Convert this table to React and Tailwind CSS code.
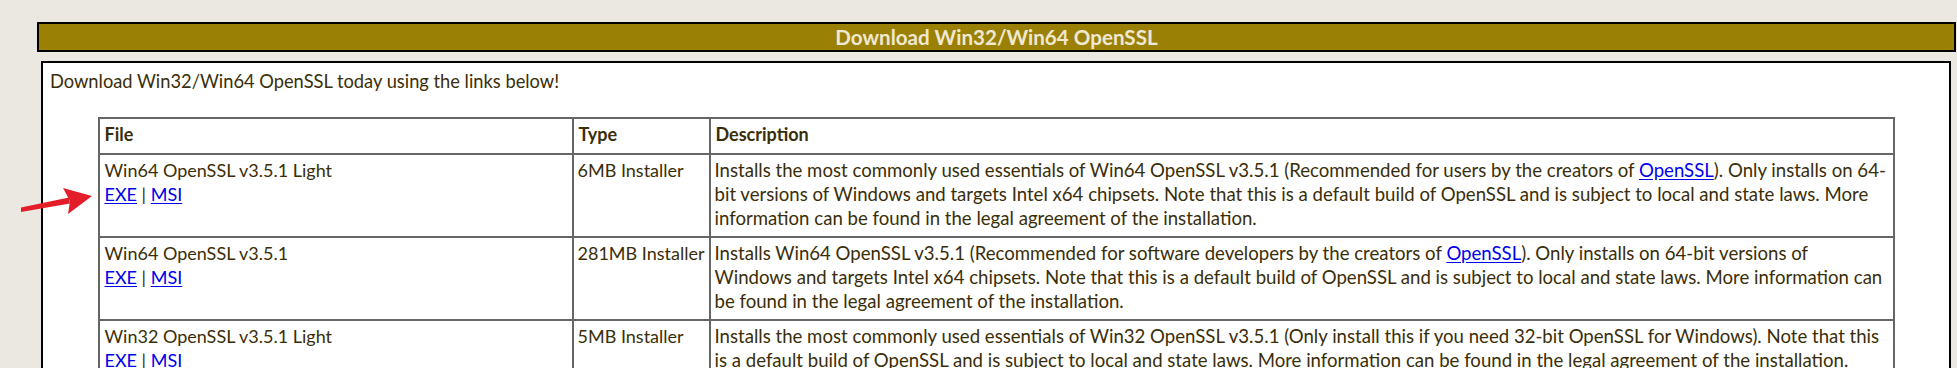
import React from 'react';

const rows = [
  {
    name: 'Win64 OpenSSL v3.5.1 Light',
    type: '6MB Installer',
    desc: [
      ['Installs the most commonly used essentials of Win64 OpenSSL v3.5.1 (Recommended for users by the creators of ', 'OpenSSL', '). Only installs on 64-'],
      ['bit versions of Windows and targets Intel x64 chipsets. Note that this is a default build of OpenSSL and is subject to local and state laws. More'],
      ['information can be found in the legal agreement of the installation.'],
    ],
  },
  {
    name: 'Win64 OpenSSL v3.5.1',
    type: '281MB Installer',
    desc: [
      ['Installs Win64 OpenSSL v3.5.1 (Recommended for software developers by the creators of ', 'OpenSSL', '). Only installs on 64-bit versions of'],
      ['Windows and targets Intel x64 chipsets. Note that this is a default build of OpenSSL and is subject to local and state laws. More information can'],
      ['be found in the legal agreement of the installation.'],
    ],
  },
  {
    name: 'Win32 OpenSSL v3.5.1 Light',
    type: '5MB Installer',
    desc: [
      ['Installs the most commonly used essentials of Win32 OpenSSL v3.5.1 (Only install this if you need 32-bit OpenSSL for Windows). Note that this'],
      ['is a default build of OpenSSL and is subject to local and state laws. More information can be found in the legal agreement of the installation.'],
    ],
  },
];

const Link = ({ children }) => (
  <a href="#" className="text-[#0000ee] underline underline-offset-2">{children}</a>
);

export default function App() {
  return (
    <div className="relative h-[368px] overflow-hidden bg-[#ebe8e1] pt-[22px] pl-[37px] pr-[1px] font-['Lato','Liberation_Sans',sans-serif] text-[18px] leading-[24px] text-[#3a2e08]">
      {/* title bar */}
      <div className="flex h-[30px] items-center justify-center border-2 border-black bg-[#9b8006] text-[20.6px] font-bold text-[#efe8d2]">
        Download Win32/Win64 OpenSSL
      </div>

      {/* content box */}
      <div className="mt-[9px] ml-[4px] mr-[5px] border-2 border-black bg-white px-[7px] pt-[6px] pb-8">
        <p className="text-[18.3px]">Download Win32/Win64 OpenSSL today using the links below!</p>

        <table className="mx-auto mt-[24px] w-[1797px] table-fixed border-collapse border-2 border-[#666]">
          <colgroup>
            <col className="w-[474px]" />
            <col className="w-[137px]" />
            <col />
          </colgroup>
          <thead>
            <tr className="text-left font-bold">
              <th className="border-2 border-[#666] px-[5px] pt-[3px] pb-[7px]">File</th>
              <th className="border-2 border-[#666] px-[5px] pt-[3px] pb-[7px]">Type</th>
              <th className="border-2 border-[#666] px-[5px] pt-[3px] pb-[7px]">Description</th>
            </tr>
          </thead>
          <tbody>
            {rows.map((r) => (
              <tr key={r.name} className="align-top">
                <td className="border-2 border-[#666] px-[5px] pt-[3px] pb-[6px]">
                  <div>{r.name}</div>
                  <div>
                    <Link>EXE</Link> | <Link>MSI</Link>
                  </div>
                </td>
                <td className="whitespace-nowrap border-2 border-[#666] px-[4px] pt-[3px] pb-[6px]">{r.type}</td>
                <td className="border-2 border-[#666] px-[4px] pt-[3px] pb-[6px] text-[18.6px]">
                  {r.desc.map((line, i) => (
                    <span key={i} className="block whitespace-nowrap">
                      {line[0]}
                      {line[1] && <Link>{line[1]}</Link>}
                      {line[2]}
                    </span>
                  ))}
                </td>
              </tr>
            ))}
          </tbody>
        </table>
      </div>

      {/* red annotation arrow */}
      <svg className="absolute left-0 top-0" width="120" height="230" viewBox="0 0 120 230">
        <polygon points="21,207.5 21,212 70,203.5 69,197.5" fill="#e31e29" />
        <polygon points="92,196 63,188 70,201 68,214" fill="#e31e29" />
      </svg>
    </div>
  );
}
